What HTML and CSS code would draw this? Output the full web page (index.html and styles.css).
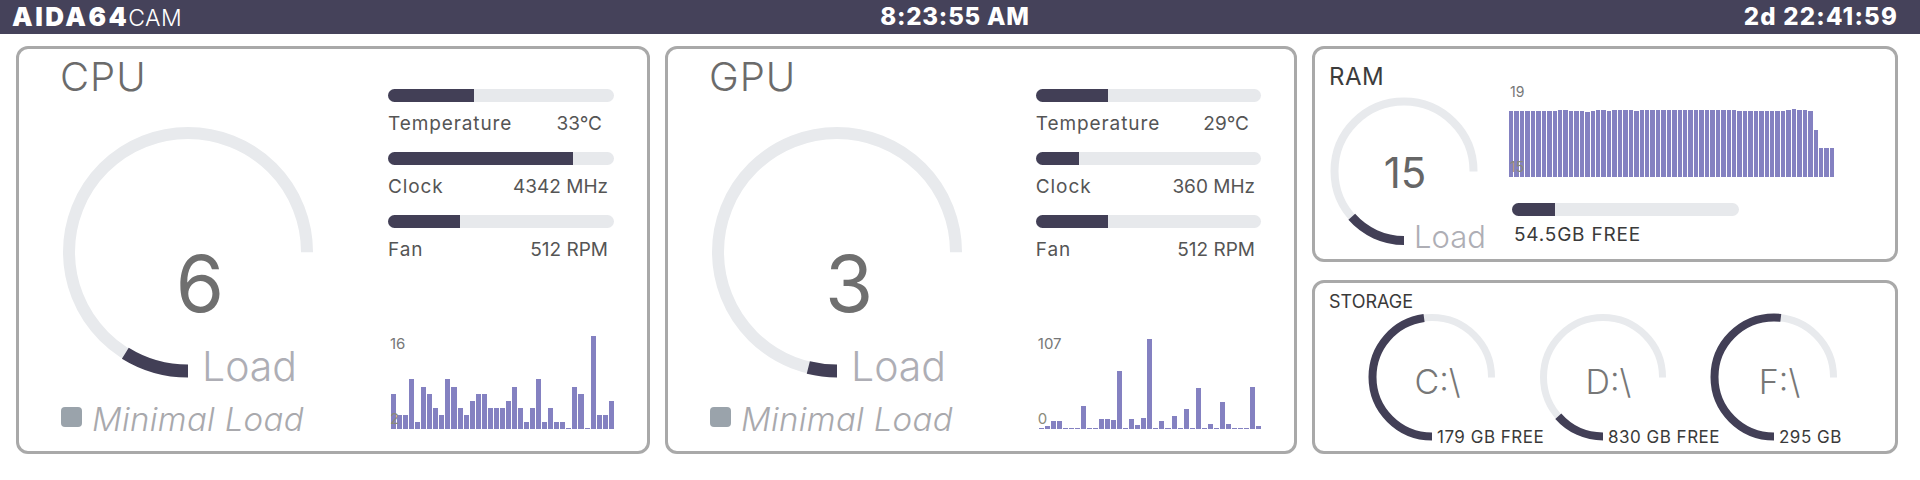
FILE: index.html
```html
<!DOCTYPE html>
<html>
<head>
<meta charset="utf-8">
<title>AIDA64 CAM</title>
<link rel="stylesheet" href="styles.css">
</head>
<body>
<header class="topbar">
  <div class="brand"><span class="brand-main">AIDA64</span><span class="brand-sub">CAM</span></div>
  <div class="clock">8:23:55 AM</div>
  <div class="uptime">2d 22:41:59</div>
</header>
<main class="dash">
  <section class="panel proc">
    <div class="proc-left">
      <h2 class="proc-title">CPU</h2>
      <div class="gauge gauge-big">
        <svg width="260" height="260" viewBox="0 0 260 260">
          <circle class="g-track" cx="130" cy="130" r="119" stroke-width="12" stroke-dasharray="560.8 747.7" transform="rotate(90 130 130)"/>
          <circle class="g-fill" cx="130" cy="130" r="119" stroke-width="13" stroke-dasharray="66 747.7" transform="rotate(90 130 130)"/>
        </svg>
        <span class="g-num">6</span>
        <span class="g-load">Load</span>
      </div>
      <div class="status"><span class="swatch"></span><span class="status-text">Minimal Load</span></div>
    </div>
    <div class="proc-right">
      <div class="stat">
        <div class="bar"><div class="fill" style="width:38%"></div></div>
        <div class="stat-row"><span class="label">Temperature</span><span class="val val-temp">33°C</span></div>
      </div>
      <div class="stat">
        <div class="bar"><div class="fill" style="width:82%"></div></div>
        <div class="stat-row"><span class="label">Clock</span><span class="val">4342 MHz</span></div>
      </div>
      <div class="stat">
        <div class="bar"><div class="fill" style="width:32%"></div></div>
        <div class="stat-row"><span class="label">Fan</span><span class="val">512 RPM</span></div>
      </div>
      <div class="chart">
        <div class="bars">
          <i style="height:35px"></i><i style="height:14px"></i><i style="height:14px"></i><i style="height:50px"></i><i style="height:7px"></i><i style="height:42px"></i><i style="height:35px"></i><i style="height:21px"></i><i style="height:14px"></i><i style="height:50px"></i>
          <i style="height:42px"></i><i style="height:21px"></i><i style="height:14px"></i><i style="height:28px"></i><i style="height:35px"></i><i style="height:35px"></i><i style="height:21px"></i><i style="height:21px"></i><i style="height:21px"></i><i style="height:28px"></i>
          <i style="height:42px"></i><i style="height:21px"></i><i style="height:7px"></i><i style="height:21px"></i><i style="height:50px"></i><i style="height:7px"></i><i style="height:21px"></i><i style="height:7px"></i><i style="height:7px"></i><i style="height:1px"></i>
          <i style="height:42px"></i><i style="height:35px"></i><i style="height:1px"></i><i style="height:93px"></i><i style="height:14px"></i><i style="height:14px"></i><i style="height:28px"></i>
        </div>
        <span class="c-max">16</span>
        <span class="c-min">2</span>
      </div>
    </div>
  </section>

  <section class="panel proc">
    <div class="proc-left">
      <h2 class="proc-title">GPU</h2>
      <div class="gauge gauge-big">
        <svg width="260" height="260" viewBox="0 0 260 260">
          <circle class="g-track" cx="130" cy="130" r="119" stroke-width="12" stroke-dasharray="560.8 747.7" transform="rotate(90 130 130)"/>
          <circle class="g-fill" cx="130" cy="130" r="119" stroke-width="13" stroke-dasharray="29 747.7" transform="rotate(90 130 130)"/>
        </svg>
        <span class="g-num">3</span>
        <span class="g-load">Load</span>
      </div>
      <div class="status"><span class="swatch"></span><span class="status-text">Minimal Load</span></div>
    </div>
    <div class="proc-right">
      <div class="stat">
        <div class="bar"><div class="fill" style="width:32%"></div></div>
        <div class="stat-row"><span class="label">Temperature</span><span class="val val-temp">29°C</span></div>
      </div>
      <div class="stat">
        <div class="bar"><div class="fill" style="width:19%"></div></div>
        <div class="stat-row"><span class="label">Clock</span><span class="val">360 MHz</span></div>
      </div>
      <div class="stat">
        <div class="bar"><div class="fill" style="width:32%"></div></div>
        <div class="stat-row"><span class="label">Fan</span><span class="val">512 RPM</span></div>
      </div>
      <div class="chart">
        <div class="bars">
          <i style="height:1px"></i><i style="height:3px"></i><i style="height:8px"></i><i style="height:8px"></i><i style="height:1px"></i><i style="height:1px"></i><i style="height:1px"></i><i style="height:23px"></i><i style="height:1px"></i><i style="height:1px"></i>
          <i style="height:10px"></i><i style="height:10px"></i><i style="height:9px"></i><i style="height:58px"></i><i style="height:1px"></i><i style="height:10px"></i><i style="height:4px"></i><i style="height:11px"></i><i style="height:90px"></i><i style="height:1px"></i>
          <i style="height:8px"></i><i style="height:1px"></i><i style="height:13px"></i><i style="height:1px"></i><i style="height:20px"></i><i style="height:1px"></i><i style="height:41px"></i><i style="height:1px"></i><i style="height:5px"></i><i style="height:1px"></i>
          <i style="height:27px"></i><i style="height:5px"></i><i style="height:1px"></i><i style="height:1px"></i><i style="height:1px"></i><i style="height:42px"></i><i style="height:3px"></i>
        </div>
        <span class="c-max">107</span>
        <span class="c-min">0</span>
      </div>
    </div>
  </section>

  <div class="side">
    <section class="panel ram">
      <div class="ram-left">
        <h2 class="ram-title">RAM</h2>
        <div class="gauge gauge-mid">
          <svg width="150" height="150" viewBox="0 0 150 150">
            <circle class="g-track" cx="75" cy="75" r="69.5" stroke-width="8" stroke-dasharray="327.5 436.7" transform="rotate(90 75 75)"/>
            <circle class="g-fill" cx="75" cy="75" r="69.5" stroke-width="9" stroke-dasharray="59 436.7" transform="rotate(90 75 75)"/>
          </svg>
          <span class="g-num">15</span>
          <span class="g-load">Load</span>
        </div>
      </div>
      <div class="ram-right">
        <span class="ram-max">19</span>
        <div class="chart ram-chart">
          <div class="bars">
            <i style="height:66px"></i><i style="height:66px"></i><i style="height:66px"></i><i style="height:66px"></i><i style="height:66px"></i><i style="height:66px"></i><i style="height:66px"></i><i style="height:66px"></i><i style="height:66px"></i><i style="height:67px"></i>
            <i style="height:67px"></i><i style="height:66px"></i><i style="height:66px"></i><i style="height:66px"></i><i style="height:65px"></i><i style="height:66px"></i><i style="height:67px"></i><i style="height:67px"></i><i style="height:66px"></i><i style="height:67px"></i>
            <i style="height:67px"></i><i style="height:67px"></i><i style="height:67px"></i><i style="height:66px"></i><i style="height:67px"></i><i style="height:67px"></i><i style="height:67px"></i><i style="height:67px"></i><i style="height:67px"></i><i style="height:67px"></i>
            <i style="height:67px"></i><i style="height:67px"></i><i style="height:67px"></i><i style="height:67px"></i><i style="height:67px"></i><i style="height:67px"></i><i style="height:67px"></i><i style="height:67px"></i><i style="height:67px"></i><i style="height:67px"></i>
            <i style="height:67px"></i><i style="height:67px"></i><i style="height:66px"></i><i style="height:66px"></i><i style="height:66px"></i><i style="height:66px"></i><i style="height:66px"></i><i style="height:66px"></i><i style="height:66px"></i><i style="height:66px"></i>
            <i style="height:66px"></i><i style="height:67px"></i><i style="height:68px"></i><i style="height:67px"></i><i style="height:67px"></i><i style="height:66px"></i><i style="height:47px"></i><i style="height:29px"></i><i style="height:29px"></i><i style="height:29px"></i>
          </div>
          <span class="c-min">15</span>
        </div>
        <div class="bar ram-bar"><div class="fill" style="width:19%"></div></div>
        <div class="ram-free">54.5GB FREE</div>
      </div>
    </section>

    <section class="panel storage">
      <h2 class="storage-title">STORAGE</h2>
      <div class="drives">
        <div class="gauge gauge-small">
          <svg width="130" height="130" viewBox="0 0 130 130">
            <circle class="g-track" cx="65" cy="65" r="59.5" stroke-width="7" stroke-dasharray="280.4 373.8" transform="rotate(90 65 65)"/>
            <circle class="g-fill" cx="65" cy="65" r="59.5" stroke-width="8" stroke-dasharray="178.6 373.8" transform="rotate(90 65 65)"/>
          </svg>
          <span class="g-drive">C:\</span>
          <span class="g-free">179 GB FREE</span>
        </div>
        <div class="gauge gauge-small">
          <svg width="130" height="130" viewBox="0 0 130 130">
            <circle class="g-track" cx="65" cy="65" r="59.5" stroke-width="7" stroke-dasharray="280.4 373.8" transform="rotate(90 65 65)"/>
            <circle class="g-fill" cx="65" cy="65" r="59.5" stroke-width="8" stroke-dasharray="50.5 373.8" transform="rotate(90 65 65)"/>
          </svg>
          <span class="g-drive">D:\</span>
          <span class="g-free">830 GB FREE</span>
        </div>
        <div class="gauge gauge-small">
          <svg width="130" height="130" viewBox="0 0 130 130">
            <circle class="g-track" cx="65" cy="65" r="59.5" stroke-width="7" stroke-dasharray="280.4 373.8" transform="rotate(90 65 65)"/>
            <circle class="g-fill" cx="65" cy="65" r="59.5" stroke-width="8" stroke-dasharray="193.5 373.8" transform="rotate(90 65 65)"/>
          </svg>
          <span class="g-drive">F:\</span>
          <span class="g-free">295 GB</span>
        </div>
      </div>
    </section>
  </div>
</main>
</body>
</html>
```

FILE: styles.css
```css
* { box-sizing: border-box; }

body {
  margin: 0;
  background: #ffffff;
  font-family: Inter, "Open Sans", "Liberation Sans", sans-serif;
  color: #555;
}

/* ---------- top bar ---------- */
.topbar {
  height: 34px;
  background: #45425a;
  color: #ffffff;
  display: grid;
  grid-template-columns: 1fr auto 1fr;
  align-items: center;
  padding: 0 22px 0 12px;
}
.brand { display: flex; align-items: baseline; }
.brand-main {
  font-weight: 900;
  font-size: 26px;
  line-height: 1;
  letter-spacing: 2.5px;
}
.brand-sub {
  font-weight: 300;
  font-size: 23px;
  line-height: 1;
  margin-left: -1px;
  letter-spacing: 0.5px;
}
.clock {
  font-weight: 800;
  font-size: 24px;
  line-height: 1;
  letter-spacing: 0.8px;
}
.uptime {
  justify-self: end;
  font-weight: 800;
  font-size: 24px;
  line-height: 1;
  letter-spacing: 1.2px;
}

/* ---------- grid ---------- */
.dash {
  display: grid;
  grid-template-columns: 634px 632px 586px;
  column-gap: 15px;
  padding: 12px 0 0 16px;
}
.panel {
  border: 3px solid #a9a9a9;
  border-radius: 12px;
  background: #fff;
}

/* ---------- CPU / GPU ---------- */
.proc {
  height: 408px;
  display: flex;
  padding: 0 33px 22px 39px;
}
.proc-left {
  width: 330px;
  display: flex;
  flex-direction: column;
}
.proc-title {
  margin: 8px 0 0 2px;
  font-size: 40px;
  line-height: 40px;
  font-weight: 300;
  letter-spacing: 1px;
  color: #6b6b6b;
}
.gauge { position: relative; flex: none; }
.gauge svg { display: block; }
.g-track { fill: none; stroke: #e8eaed; }
.g-fill { fill: none; stroke: #423f56; }

.gauge-big { width: 260px; height: 260px; margin-top: 25px; }
.gauge-big .g-num {
  position: absolute;
  left: 102px;
  top: 123px;
  width: 80px;
  text-align: center;
  font-size: 78px;
  line-height: 1;
  font-weight: 400;
  color: #6f6f6f;
}
.gauge-big .g-load {
  position: absolute;
  left: 144px;
  top: 224px;
  font-size: 41px;
  line-height: 1;
  font-weight: 300;
  color: #aeaeb5;
}
.status {
  display: flex;
  align-items: flex-start;
  margin-top: 25px;
  margin-left: 3px;
}
.swatch {
  width: 21px;
  height: 20px;
  border-radius: 4px;
  background: #9aa3ab;
}
.status-text {
  margin: -4px 0 0 10px;
  font-size: 33px;
  line-height: 1;
  font-style: italic;
  font-weight: 300;
  letter-spacing: 0.3px;
  color: #a9a9ad;
}

.proc-right {
  width: 226px;
  display: flex;
  flex-direction: column;
  padding-top: 40px;
}
.stat + .stat { margin-top: 17px; }
.bar {
  height: 13px;
  background: #e7e9ec;
  border-radius: 7px;
  overflow: hidden;
}
.fill {
  height: 100%;
  background: #423f56;
}
.stat-row {
  display: flex;
  justify-content: space-between;
  margin-top: 11px;
  font-size: 19px;
  line-height: 22px;
  color: #555;
}
.label { letter-spacing: 0.9px; }
.val { padding-right: 6px; }
.val-temp { padding-right: 12px; }

.chart {
  position: relative;
  margin-top: auto;
  height: 93px;
  padding-left: 3px;
}
.bars {
  display: flex;
  align-items: flex-end;
  gap: 1px;
  height: 100%;
}
.bars i {
  flex: 1;
  min-height: 1px;
  background: #8481c1;
}
.c-max {
  position: absolute;
  left: 2px;
  top: 0;
  font-size: 15px;
  line-height: 15px;
  color: #777;
}
.c-min {
  position: absolute;
  left: 2px;
  bottom: 3px;
  font-size: 15px;
  line-height: 15px;
  color: #8a8a7a;
}

/* ---------- side column ---------- */
.side {
  display: flex;
  flex-direction: column;
  gap: 18px;
}
.ram {
  height: 216px;
  display: flex;
  padding: 16px 0 0 14px;
}
.ram-left { width: 180px; }
.ram-title {
  margin: 0;
  font-size: 24px;
  line-height: 24px;
  font-weight: 400;
  letter-spacing: 0.5px;
  color: #3c3c3c;
}
.gauge-mid { width: 150px; height: 150px; margin-top: 7px; }
.gauge-mid .g-num {
  position: absolute;
  left: 46px;
  top: 56px;
  width: 60px;
  text-align: center;
  font-size: 42px;
  line-height: 1;
  color: #666;
}
.gauge-mid .g-load {
  position: absolute;
  left: 85px;
  top: 125px;
  font-size: 31px;
  line-height: 1;
  font-weight: 300;
  color: #aeaeb5;
}
.ram-right {
  width: 325px;
  display: flex;
  flex-direction: column;
  padding-top: 20px;
}
.ram-max {
  font-size: 14px;
  line-height: 14px;
  color: #777;
  margin-left: 1px;
}
.ram-chart {
  margin-top: 11px;
  height: 67px;
  padding-left: 0;
}
.ram-chart .c-min { font-size: 14px; line-height: 14px; left: 1px; }
.ram-bar {
  width: 227px;
  margin: 26px 0 0 3px;
}
.ram-free {
  margin: 8px 0 0 5px;
  font-size: 19px;
  line-height: 22px;
  letter-spacing: 0.8px;
  color: #3a3a3a;
}

.storage {
  height: 174px;
  padding: 10px 0 0 14px;
}
.storage-title {
  margin: 0;
  font-size: 18px;
  line-height: 18px;
  font-weight: 400;
  color: #3a3a3a;
}
.drives {
  display: flex;
  gap: 41px;
  margin: 1px 0 0 38px;
}
.gauge-small { width: 130px; height: 130px; }
.g-drive {
  position: absolute;
  left: 0;
  right: -11px;
  top: 53px;
  text-align: center;
  font-size: 34px;
  line-height: 1;
  font-weight: 300;
  color: #777;
}
.g-free {
  position: absolute;
  left: 70px;
  top: 117px;
  white-space: nowrap;
  font-size: 17px;
  line-height: 1;
  letter-spacing: 0.5px;
  color: #3a3a3a;
}
```
